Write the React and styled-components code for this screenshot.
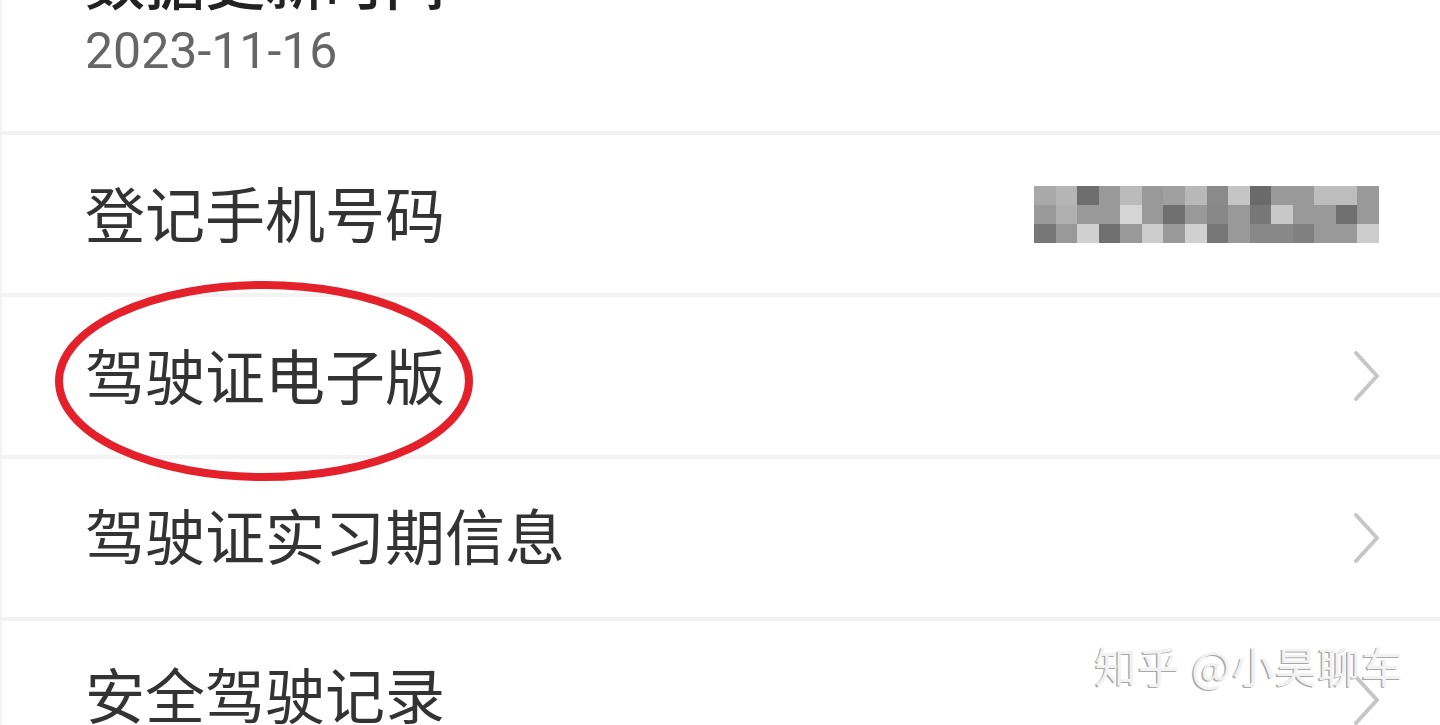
import React from "react";
import styled, { createGlobalStyle } from "styled-components";

const GlobalStyle = createGlobalStyle`
  html, body { margin: 0; padding: 0; background: #f3f3f3; }
  body { font-family: Roboto, "Noto Sans CJK SC", sans-serif; }
`;

const Page = styled.div`
  position: relative;
  height: 725px;
  overflow: hidden;
  display: flex;
  flex-direction: column;
  gap: 4px;
  padding-left: 2px;
  background: #f3f3f3;
`;

const TopCard = styled.div`
  flex-shrink: 0;
  margin-top: -57px;
  background: #fff;
  padding: 0 60px 50px 83px;
  display: flex;
  flex-direction: column;
  gap: 6px;
`;

const Title = styled.div`
  font-family: "Noto Sans CJK SC", sans-serif;
  font-size: 60px;
  line-height: 72px;
  font-weight: 500;
  color: #222;
`;

const DateText = styled.div`
  font-family: Roboto, sans-serif;
  font-size: 50px;
  line-height: 60px;
  color: #666;
`;

const Row = styled.div`
  flex-shrink: 0;
  height: ${(p) => p.$h || 158}px;
  display: flex;
  align-items: center;
  justify-content: space-between;
  background: #fff;
  padding: 0 60px 0 83px;
`;

const Label = styled.div`
  font-family: "Noto Sans CJK SC", sans-serif;
  font-size: 60px;
  line-height: 60px;
  padding-bottom: ${(p) => p.$lift || 4}px;
  color: #333;
`;

const Mosaic = styled.div`
  width: 345px;
  height: 57px;
  display: grid;
  grid-template-columns: repeat(16, 1fr);
  grid-template-rows: repeat(3, 1fr);
  margin-right: 1px;
  filter: blur(0.7px);
`;

const Cell = styled.div`
  background: ${(p) => p.$c};
`;

const ChevronSvg = styled.svg`
  width: 28px;
  height: 52px;
  display: block;
`;

const Ellipse = styled.svg`
  position: absolute;
  left: 50px;
  top: 274px;
  width: 430px;
  height: 215px;
  pointer-events: none;
`;

const Watermark = styled.div`
  position: absolute;
  right: 36px;
  top: 638px;
  font-family: "Noto Sans CJK SC", sans-serif;
  font-size: 42px;
  line-height: 54px;
  letter-spacing: 1px;
  color: #f2f2f2;
  text-shadow: -1.5px 1px 0 #a8a8a8;
  white-space: nowrap;
`;

const shades = [
  ["#a9a9a9", "#b5b5b5", "#6e6e6e", "#999", "#bbb", "#999", "#a0a0a0", "#b8b8b8", "#8a8a8a", "#c5c5c5", "#6a6a6a", "#999", "#999", "#bdbdbd", "#bdbdbd", "#999"],
  ["#9a9a9a", "#b0b0b0", "#999", "#999", "#d5d5d5", "#999", "#707070", "#999", "#888", "#999", "#777", "#c8c8c8", "#999", "#999", "#6f6f6f", "#999"],
  ["#777", "#999", "#d0d0d0", "#707070", "#999", "#ccc", "#999", "#d0d0d0", "#777", "#999", "#888", "#888", "#808080", "#999", "#999", "#ccc"],
];

const Chevron = () => (
  <ChevronSvg viewBox="0 0 28 52">
    <path d="M4 3 L25 26 L4 49" fill="none" stroke="#c6c6c6" strokeWidth="4" strokeLinecap="round" strokeLinejoin="round" />
  </ChevronSvg>
);

const rows = [
  { t: "驾驶证电子版", lift: 4 },
  { t: "驾驶证实习期信息", lift: 8 },
  { t: "安全驾驶记录", lift: 14 },
];

export default function App() {
  return (
    <>
      <GlobalStyle />
      <Page>
        <TopCard>
          <Title>数据更新时间</Title>
          <DateText>2023-11-16</DateText>
        </TopCard>
        <Row>
          <Label $lift={4}>登记手机号码</Label>
          <Mosaic>
            {shades.flat().map((c, i) => (
              <Cell key={i} $c={c} />
            ))}
          </Mosaic>
        </Row>
        {rows.map((r) => (
          <Row key={r.t}>
            <Label $lift={r.lift}>{r.t}</Label>
            <Chevron />
          </Row>
        ))}
        <Ellipse viewBox="0 0 430 215">
          <ellipse cx="214" cy="107" rx="205" ry="96" fill="none" stroke="#e4212a" strokeWidth="8" />
        </Ellipse>
        <Watermark>知乎 @小昊聊车</Watermark>
      </Page>
    </>
  );
}
